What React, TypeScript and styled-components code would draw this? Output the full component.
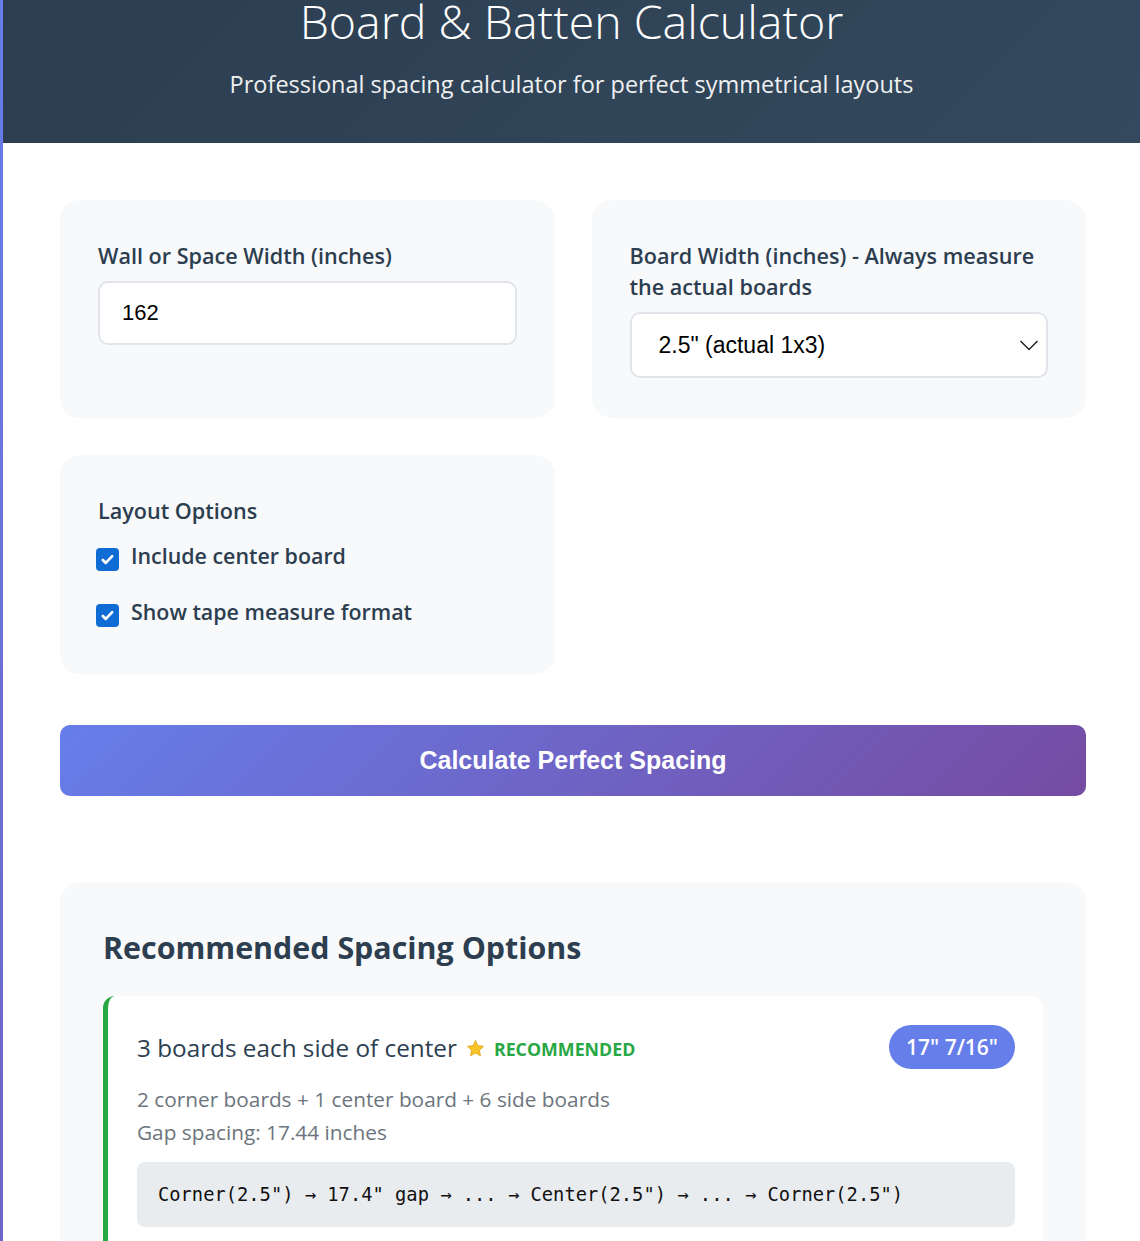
import styled, { createGlobalStyle } from 'styled-components';

const GlobalStyle = createGlobalStyle`
  * {
    box-sizing: border-box;
  }
  body {
    margin: 0;
    font-family: "Open Sans", "Noto Sans", sans-serif;
    background: linear-gradient(135deg, #667eea 0%, #764ba2 100%);
    min-height: 100vh;
  }
`;

const Styled = {
  Page: styled.div`
    margin-left: 3px;
    min-height: 100vh;
    background: #fff;
    overflow: hidden;
  `,
  Header: styled.header`
    height: 143px;
    background: linear-gradient(135deg, #2c3e50 0%, #34495e 100%);
    color: #fff;
    text-align: center;
    overflow: hidden;
  `,
  Title: styled.h1`
    margin: -6px 0 0;
    font-size: 46.5px;
    font-weight: 300;
    line-height: 1.2;
  `,
  Subtitle: styled.p`
    margin: 18px 0 0;
    font-size: 23.5px;
    line-height: 1.4;
    opacity: 0.92;
  `,
  Main: styled.main`
    padding: 57px 54px 0 57px;
  `,
  FormGrid: styled.div`
    display: grid;
    grid-template-columns: 1fr 1fr;
    gap: 37px;
  `,
  Card: styled.div<{ $bottom?: number }>`
    background: #f8f9fa;
    border-radius: 20px;
    padding: 40px 38px ${(p) => p.$bottom ?? 40}px;
  `,
  Label: styled.label<{ $flush?: boolean }>`
    display: block;
    margin-bottom: ${(p) => (p.$flush ? 0 : 10)}px;
    font-size: 21.6px;
    font-weight: 600;
    line-height: 31px;
    color: #2c3e50;
  `,
  Input: styled.input`
    display: block;
    width: 100%;
    height: 64px;
    padding: 0 22px;
    border: 2px solid #e1e5e9;
    border-radius: 10px;
    background: #fff;
    font-family: "Liberation Sans", Arial, sans-serif;
    font-size: 22px;
    color: #000;
    outline: none;
  `,
  SelectWrap: styled.div`
    position: relative;
  `,
  Select: styled.select`
    display: block;
    width: 100%;
    height: 66px;
    padding: 0 27px;
    border: 2px solid #e1e5e9;
    border-radius: 10px;
    background: #fff;
    font-family: "Liberation Sans", Arial, sans-serif;
    font-size: 23px;
    color: #000;
    appearance: none;
    outline: none;
  `,
  Chevron: styled.svg`
    position: absolute;
    right: 8px;
    top: 50%;
    width: 22px;
    height: 22px;
    margin-top: -11px;
    pointer-events: none;
  `,
  Options: styled.div`
    display: flex;
    flex-direction: column;
    gap: 25px;
    margin-top: 14px;
  `,
  CheckRow: styled.label`
    display: flex;
    align-items: center;
    gap: 12px;
    margin-left: -2px;
    font-size: 21.4px;
    font-weight: 600;
    line-height: 31px;
    color: #2c3e50;
  `,
  CheckBox: styled.span`
    display: flex;
    align-items: center;
    justify-content: center;
    width: 23px;
    height: 23px;
    margin-top: 7px;
    border-radius: 4px;
    background: #0f6cd4;
  `,
  CalcButton: styled.button`
    display: block;
    width: 100%;
    height: 71px;
    margin-top: 51px;
    border: none;
    border-radius: 10px;
    background: linear-gradient(135deg, #667eea 0%, #764ba2 100%);
    color: #fff;
    font-family: "Liberation Sans", Arial, sans-serif;
    font-size: 25px;
    font-weight: 700;
  `,
  Results: styled.section`
    margin-top: 86px;
    padding: 43px 43px 60px;
    background: #f8f9fa;
    border-radius: 20px;
  `,
  ResultsTitle: styled.h2`
    margin: 4px 0 29px;
    font-size: 30.4px;
    font-weight: 700;
    line-height: 38px;
    color: #2c3e50;
  `,
  OptionCard: styled.div<{ $accent: string }>`
    padding: 29px 28px 29px 29px;
    background: #fff;
    border-left: 5px solid ${(p) => p.$accent};
    border-radius: 12px;
  `,
  OptionHead: styled.div`
    display: flex;
    align-items: center;
    justify-content: space-between;
  `,
  OptionTitle: styled.div`
    display: flex;
    align-items: center;
    font-size: 24.3px;
    font-weight: 500;
    color: #2c3e50;
  `,
  Star: styled.svg`
    width: 19px;
    height: 19px;
    margin: 3px 9px 0 9px;
  `,
  Tag: styled.span`
    margin-top: 3px;
    font-size: 17.8px;
    font-weight: 700;
    color: #28a745;
  `,
  Badge: styled.span`
    display: flex;
    align-items: center;
    height: 44px;
    padding: 0 17px;
    border-radius: 22px;
    background: #667eea;
    color: #fff;
    font-size: 21px;
    font-weight: 600;
  `,
  Details: styled.div`
    margin-top: 14px;
    font-size: 20.8px;
    line-height: 33px;
    color: #6c757d;
  `,
  Sequence: styled.div`
    display: flex;
    align-items: center;
    height: 65px;
    margin-top: 13px;
    padding: 0 21px;
    border-radius: 8px;
    background: #e9ecef;
    font-family: "DejaVu Sans Mono", "Liberation Mono", monospace;
    font-size: 18.75px;
    color: #111;
    white-space: pre;
  `,
};

const Check = () => (
  <svg width="15" height="15" viewBox="0 0 16 16">
    <path d="M3 8.5l3.2 3.2L13 4.5" fill="none" stroke="#fff" strokeWidth="2.8" strokeLinecap="round" strokeLinejoin="round" />
  </svg>
);

export const App = () => {
  return (
    <>
      <GlobalStyle />
      <Styled.Page>
        <Styled.Header>
          <Styled.Title>Board &amp; Batten Calculator</Styled.Title>
          <Styled.Subtitle>Professional spacing calculator for perfect symmetrical layouts</Styled.Subtitle>
        </Styled.Header>

        <Styled.Main>
          <Styled.FormGrid>
            <Styled.Card>
              <Styled.Label htmlFor="wall">Wall or Space Width (inches)</Styled.Label>
              <Styled.Input id="wall" defaultValue="162" />
            </Styled.Card>
            <Styled.Card>
              <Styled.Label htmlFor="board">Board Width (inches) - Always measure the actual boards</Styled.Label>
              <Styled.SelectWrap>
                <Styled.Select id="board" defaultValue="2.5">
                  <option value="2.5">2.5" (actual 1x3)</option>
                  <option value="3.5">3.5" (actual 1x4)</option>
                </Styled.Select>
                <Styled.Chevron viewBox="0 0 22 22">
                  <path d="M2.5 7l8.5 8.5L19.5 7" fill="none" stroke="#222" strokeWidth="1.5" />
                </Styled.Chevron>
              </Styled.SelectWrap>
            </Styled.Card>
            <Styled.Card $bottom={47}>
              <Styled.Label as="div" $flush>Layout Options</Styled.Label>
              <Styled.Options>
                <Styled.CheckRow>
                  <Styled.CheckBox><Check /></Styled.CheckBox>
                  Include center board
                </Styled.CheckRow>
                <Styled.CheckRow>
                  <Styled.CheckBox><Check /></Styled.CheckBox>
                  Show tape measure format
                </Styled.CheckRow>
              </Styled.Options>
            </Styled.Card>
          </Styled.FormGrid>

          <Styled.CalcButton>Calculate Perfect Spacing</Styled.CalcButton>

          <Styled.Results>
            <Styled.ResultsTitle>Recommended Spacing Options</Styled.ResultsTitle>
            <Styled.OptionCard $accent="#28a745">
              <Styled.OptionHead>
                <Styled.OptionTitle>
                  3 boards each side of center
                  <Styled.Star viewBox="0 0 24 24">
                    <path
                      d="M12 1.8l3.1 6.6 7.1.9-5.2 4.9 1.3 7.1L12 17.8l-6.3 3.5L7 14.2 1.8 9.3l7.1-.9z"
                      fill="#f7c325"
                      stroke="#e0a314"
                      strokeWidth="1"
                      strokeLinejoin="round"
                    />
                  </Styled.Star>
                  <Styled.Tag>RECOMMENDED</Styled.Tag>
                </Styled.OptionTitle>
                <Styled.Badge>17" 7/16"</Styled.Badge>
              </Styled.OptionHead>
              <Styled.Details>
                <div>2 corner boards + 1 center board + 6 side boards</div>
                <div>Gap spacing: 17.44 inches</div>
              </Styled.Details>
              <Styled.Sequence>Corner(2.5") → 17.4" gap → ... → Center(2.5") → ... → Corner(2.5")</Styled.Sequence>
            </Styled.OptionCard>
          </Styled.Results>
        </Styled.Main>
      </Styled.Page>
    </>
  );
};

export default App;
